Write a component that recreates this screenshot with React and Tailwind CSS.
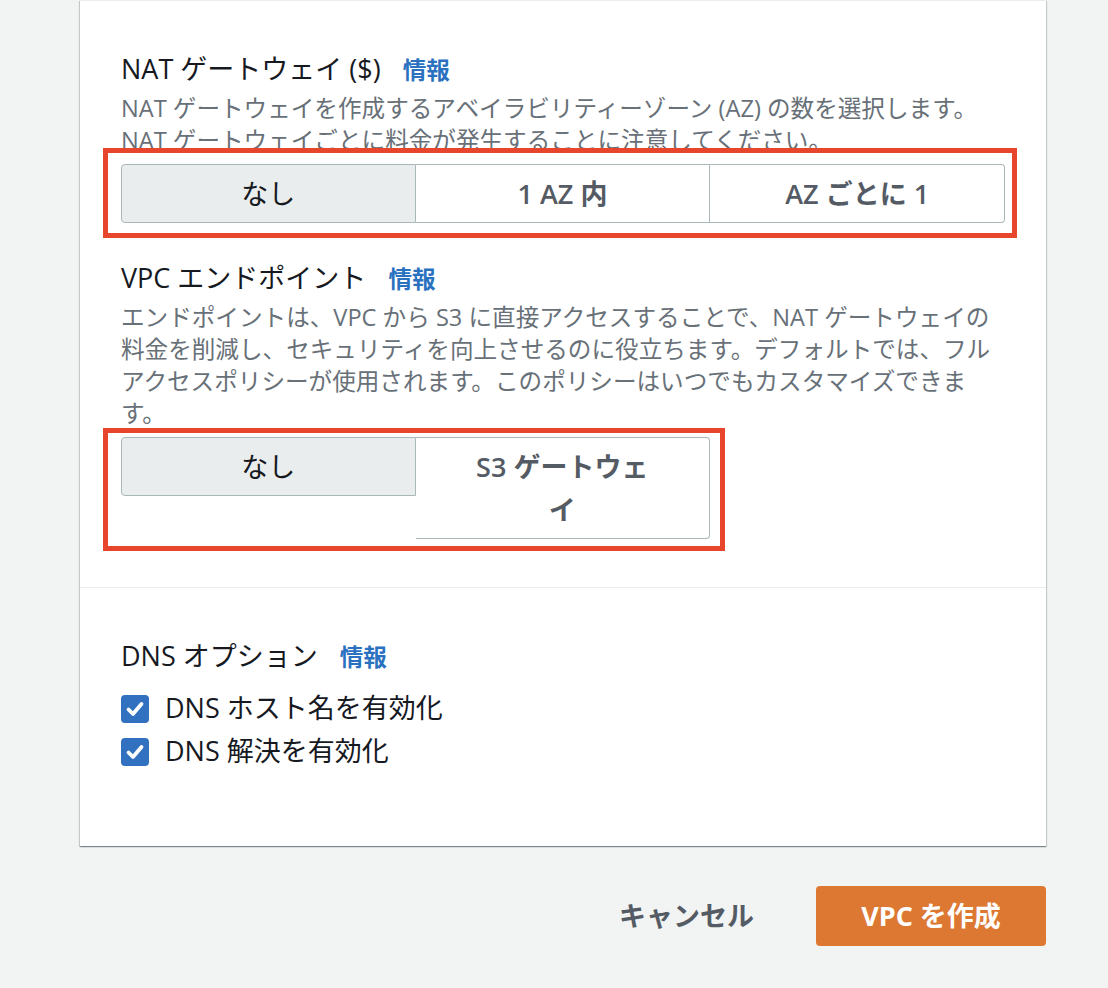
import React from "react"

const font = "font-['Open_Sans','Noto_Sans_CJK_JP',sans-serif]"

const Label = ({children}) => {
    return (
        <div className="flex items-baseline gap-[22px]">
            <span className="text-[27px] leading-[36px] text-[#16191f]">{children}</span>
            <a href="#" className="text-[23.6px] leading-[36px] font-bold text-[#2a71c0]">情報</a>
        </div>
    )
}

const Desc = ({children}) => {
    return (
        <p className="mt-[4px] text-[23.6px] leading-[32px] text-[#687078]">{children}</p>
    )
}

const Annotation = ({className}) => {
    return <div className={"pointer-events-none absolute border-[5px] border-[#e8462c] " + className}></div>
}

const CheckBox = ({label}) => {
    return (
        <label className="flex h-[43px] items-center gap-[16px]">
            <span className="flex h-[28px] w-[28px] items-center justify-center rounded-[4px] bg-[#3171bf]">
                <svg viewBox="0 0 24 24" className="h-[24px] w-[24px]" fill="none" stroke="white" strokeWidth="3.8" strokeLinecap="round" strokeLinejoin="round">
                    <path d="M5.5 12.5l4.5 4.5L18.5 7" />
                </svg>
            </span>
            <span className="text-[27px] text-[#16191f]">{label}</span>
        </label>
    )
}

export default function App() {
    return (
        <div className={"min-h-screen bg-[#f2f3f3] pb-10 " + font}>
            <div className="ml-[80px] w-[966px] border-t border-[#eaeded] bg-white shadow-[0_1px_1px_0_rgba(0,28,36,0.3),1px_1px_1px_0_rgba(0,28,36,0.15),-1px_1px_1px_0_rgba(0,28,36,0.15)]">
                {/* NAT / endpoints */}
                <div className="px-[41px] pt-[50px] pb-[48px]">
                    <Label>NAT ゲートウェイ ($)</Label>
                    <Desc>
                        NAT ゲートウェイを作成するアベイラビリティーゾーン (AZ) の数を選択します。
                        NAT ゲートウェイごとに料金が発生することに注意してください。
                    </Desc>
                    <div className="relative mt-[8px]">
                        <div className="grid grid-cols-3 text-[27px] leading-[43px]">
                            <button className="rounded-l-[4px] border border-[#aab7b8] bg-[#eaeded] py-[7px] font-normal text-[#16191f]">なし</button>
                            <button className="border-y border-r border-[#aab7b8] bg-white py-[7px] font-semibold text-[#545b64]">1 AZ 内</button>
                            <button className="rounded-r-[4px] border-y border-r border-[#aab7b8] bg-white py-[7px] font-semibold text-[#545b64]">AZ ごとに 1</button>
                        </div>
                        <Annotation className="-left-[18px] -right-[12px] -top-[16px] -bottom-[15px]" />
                    </div>

                    <div className="mt-[37px]">
                        <Label>VPC エンドポイント</Label>
                        <Desc>
                            エンドポイントは、VPC から S3 に直接アクセスすることで、NAT ゲートウェイの料金を削減し、セキュリティを向上させるのに役立ちます。デフォルトでは、フルアクセスポリシーが使用されます。このポリシーはいつでもカスタマイズできます。
                        </Desc>
                        <div className="relative mt-[8px] w-[589px]">
                            <div className="grid grid-cols-2 items-start text-[27px] leading-[43px]">
                                <button className="rounded-l-[4px] border border-[#aab7b8] bg-[#eaeded] py-[7px] font-normal text-[#16191f]">なし</button>
                                <button className="rounded-r-[4px] border-y border-r border-[#aab7b8] bg-white px-[52px] py-[7px] font-semibold text-[#545b64]">S3 ゲートウェイ</button>
                            </div>
                            <Annotation className="-left-[18px] -right-[15px] -top-[9px] -bottom-[12px]" />
                        </div>
                    </div>
                </div>

                <div className="border-t border-[#eaeded] px-[41px] pt-[50px] pb-[73px]">
                    <Label>DNS オプション</Label>
                    <div className="mt-[12px]">
                        <CheckBox label="DNS ホスト名を有効化" />
                        <CheckBox label="DNS 解決を有効化" />
                    </div>
                </div>
            </div>

            <div className="mt-[40px] flex w-[1046px] items-center justify-end gap-[32px]">
                <button className="px-[30px] text-[27px] font-bold text-[#545b64]">キャンセル</button>
                <button className="h-[60px] w-[230px] rounded-[4px] bg-[#dd7833] text-[27px] font-bold text-white">VPC を作成</button>
            </div>
        </div>
    )
}
